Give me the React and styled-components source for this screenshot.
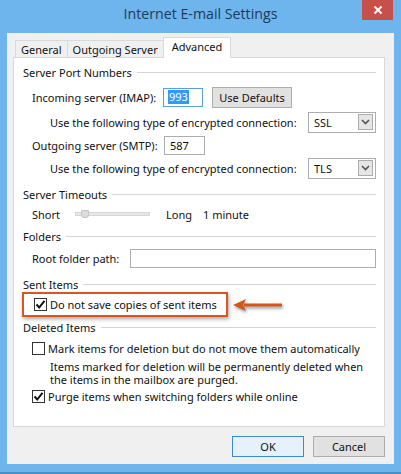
import React from "react";
import styled, { createGlobalStyle } from "styled-components";

const GlobalStyle = createGlobalStyle`
	html, body {
		margin: 0;
		padding: 0;
		background: #6db5ec;
	}
	body {
		font-family: "Noto Sans", "Liberation Sans", sans-serif;
		font-size: 11px;
		color: #1a1a1a;
	}
`;

function Checkbox({ checked }) {
	return (
		<StCheck>
			{checked && (
				<svg width="11" height="11" viewBox="0 0 11 11">
					<path d="M1.5 5.5 L4.2 8.5 L9.5 1.8" fill="none" stroke="#111" strokeWidth="2" />
				</svg>
			)}
		</StCheck>
	);
}

function Select({ value }) {
	return (
		<StSelect>
			<span>{value}</span>
			<StSelectArrow>
				<svg width="9" height="6" viewBox="0 0 9 6">
					<path d="M1 1 L4.5 4.5 L8 1" fill="none" stroke="#555" strokeWidth="1.6" />
				</svg>
			</StSelectArrow>
		</StSelect>
	);
}

function Header({ children, mt }) {
	return (
		<StHeader $mt={mt}>
			<span>{children}</span>
			<StRule />
		</StHeader>
	);
}

function App() {
	return (
		<>
			<GlobalStyle />
			<StWindow>
				<StTitleBar>
					<StTitle>Internet E-mail Settings</StTitle>
					<StClose>
						<svg width="10" height="10" viewBox="0 0 10 10">
							<path d="M1.5 1.5 L8.5 8.5 M8.5 1.5 L1.5 8.5" stroke="#fff" strokeWidth="1.8" />
						</svg>
					</StClose>
				</StTitleBar>
				<StBody>
					<StTabs>
						<StTab>General</StTab>
						<StTab>Outgoing Server</StTab>
						<StTab $active>Advanced</StTab>
					</StTabs>
					<StPanel>
						<Header mt={6}>Server Port Numbers</Header>
						<StRow $mt={7} $indent={9}>
							<StLabel $w={131}>Incoming server (IMAP):</StLabel>
							<StInput $w={40} $focus>
								<StSelected>993</StSelected>
							</StInput>
							<StButton $w={80} $ml={9}>Use Defaults</StButton>
						</StRow>
						<StRow $mt={5} $indent={27}>
							<StLabel $w={258}>Use the following type of encrypted connection:</StLabel>
							<Select value="SSL" />
						</StRow>
						<StRow $mt={3} $indent={9}>
							<StLabel $w={132}>Outgoing server (SMTP):</StLabel>
							<StInput $w={41}>587</StInput>
						</StRow>
						<StRow $mt={3} $indent={27}>
							<StLabel $w={258}>Use the following type of encrypted connection:</StLabel>
							<Select value="TLS" />
						</StRow>
						<Header mt={8}>Server Timeouts</Header>
						<StRow $mt={4} $h={16} $indent={9}>
							<StLabel $w={41}>Short</StLabel>
							<StSlider>
								<StThumb />
							</StSlider>
							<StLabel $w={35} $ml={14}>Long</StLabel>
							<span>1 minute</span>
						</StRow>
						<Header mt={6}>Folders</Header>
						<StRow $mt={4} $indent={9}>
							<StLabel $w={98}>Root folder path:</StLabel>
							<StInput $w={246} />
						</StRow>
						<Header mt={8}>Sent Items</Header>
						<StHighlight>
							<Checkbox checked />
							<span>Do not save copies of sent items</span>
							<StArrow width="52" height="16" viewBox="0 0 52 16">
								<path d="M12 8 H50" stroke="#d3561f" strokeWidth="3" />
								<path d="M1 8 L14 2 L11 8 L14 14 Z" fill="#d3561f" />
							</StArrow>
						</StHighlight>
						<Header mt={2}>Deleted Items</Header>
						<StRow $mt={5} $h={16} $indent={9}>
							<Checkbox />
							<span>Mark items for deletion but do not move them automatically</span>
						</StRow>
						<StNote>
							<div>Items marked for deletion will be permanently deleted when</div>
							<div>the items in the mailbox are purged.</div>
						</StNote>
						<StRow $mt={2} $h={16} $indent={9}>
							<Checkbox checked />
							<span>Purge items when switching folders while online</span>
						</StRow>
					</StPanel>
					<StFooter>
						<StButton $w={72} $default>
							OK
						</StButton>
						<StButton $w={72}>Cancel</StButton>
					</StFooter>
				</StBody>
			</StWindow>
		</>
	);
}

export default App;

const StWindow = styled.div`
	width: 401px;
	height: 474px;
	background: #6db5ec;
	display: flex;
	flex-direction: column;
	box-sizing: border-box;
	padding: 0 7px 8px 7px;
	border-bottom: 2px solid #4b8fc6;
`;

const StTitleBar = styled.div`
	height: 33px;
	position: relative;
	display: flex;
	justify-content: center;
	align-items: flex-start;
`;

const StTitle = styled.div`
	font-family: "Open Sans", "Noto Sans", sans-serif;
	font-size: 14.2px;
	color: #203a5a;
	margin-top: 4px;
`;

const StClose = styled.div`
	position: absolute;
	right: 1px;
	top: 0;
	width: 31px;
	height: 20px;
	background: #c9504a;
	display: flex;
	align-items: center;
	justify-content: center;
`;

const StBody = styled.div`
	flex: 1;
	background: #f0f0f0;
	display: flex;
	flex-direction: column;
	padding: 3px 9px 0 6px;
`;

const StTabs = styled.div`
	display: flex;
	align-items: flex-end;
	height: 21px;
	padding-left: 2px;
`;

const StTab = styled.div`
	height: ${(p) => (p.$active ? "21px" : "17px")};
	box-sizing: border-box;
	padding: ${(p) => (p.$active ? "1px 8px 0 8px" : "1px 5px 0 5px")};
	border: 1px solid #d9d9d9;
	border-bottom: none;
	background: ${(p) => (p.$active ? "#fff" : "#f0f0f0")};
	margin-right: -1px;
	position: relative;
	z-index: ${(p) => (p.$active ? 2 : 1)};
	margin-bottom: ${(p) => (p.$active ? "-1px" : "0")};
	line-height: 15px;
	color: #111;
`;

const StPanel = styled.div`
	height: 370px;
	box-sizing: border-box;
	background: #fff;
	border: 1px solid #d9d9d9;
	display: flex;
	flex-direction: column;
	padding: 0 8px 0 9px;
`;

const StHeader = styled.div`
	display: flex;
	align-items: center;
	height: 16px;
	margin-top: ${(p) => p.$mt}px;
	color: #111;
	span {
		margin-right: 5px;
	}
`;

const StRule = styled.div`
	flex: 1;
	height: 1px;
	background: #d5d5d5;
	margin-top: 1px;
`;

const StRow = styled.div`
	display: flex;
	align-items: center;
	height: ${(p) => p.$h || 20}px;
	margin-top: ${(p) => p.$mt}px;
	padding-left: ${(p) => p.$indent}px;
	gap: ${(p) => (p.$h ? 2 : 0)}px;
	color: #111;
	white-space: nowrap;
`;

const StLabel = styled.span`
	width: ${(p) => p.$w}px;
	margin-left: ${(p) => p.$ml || 0}px;
	flex-shrink: 0;
`;

const StInput = styled.div`
	width: ${(p) => p.$w}px;
	height: 19px;
	box-sizing: border-box;
	border: 1px solid ${(p) => (p.$focus ? "#5a9ee0" : "#abadb3")};
	background: #fff;
	display: flex;
	align-items: center;
	padding-left: 5px;
`;

const StSelected = styled.span`
	background: #3399ff;
	color: #fff;
	line-height: 14px;
	padding: 0 1px;
	margin-left: -1px;
`;

const StButton = styled.div`
	width: ${(p) => p.$w}px;
	height: 21px;
	box-sizing: border-box;
	margin-left: ${(p) => p.$ml || 0}px;
	border: 1px solid ${(p) => (p.$default ? "#3c8ad6" : "#adadad")};
	background: ${(p) => (p.$default ? "#e5f1fb" : "#e1e1e1")};
	display: flex;
	align-items: center;
	justify-content: center;
	color: #111;
`;

const StSelect = styled.div`
	width: 68px;
	height: 21px;
	box-sizing: border-box;
	border: 1px solid #abadb3;
	background: #fff;
	display: flex;
	align-items: center;
	justify-content: space-between;
	padding: 1px 2px 1px 5px;
`;

const StSelectArrow = styled.div`
	width: 15px;
	height: 16px;
	box-sizing: border-box;
	background: #e5e5e5;
	border: 1px solid #acacac;
	display: flex;
	align-items: center;
	justify-content: center;
`;

const StSlider = styled.div`
	width: 75px;
	height: 4px;
	background: #e7e7e7;
	border: 1px solid #d6d6d6;
	box-sizing: border-box;
	position: relative;
`;

const StThumb = styled.div`
	position: absolute;
	left: 5px;
	top: -3px;
	width: 6px;
	height: 6px;
	background: #dcdcdc;
	border: 1px solid #c4c4c4;
	border-radius: 0 0 3px 3px;
`;

const StHighlight = styled.div`
	position: relative;
	display: flex;
	align-items: center;
	gap: 2px;
	height: 25px;
	width: 206px;
	box-sizing: border-box;
	margin-left: -1px;
	padding-left: 10px;
	border: 2px solid #d9561e;
	box-shadow: 1px 2px 4px rgba(0, 0, 0, 0.35);
	color: #111;
	white-space: nowrap;
`;

const StArrow = styled.svg`
	position: absolute;
	left: 208px;
	top: 3px;
	filter: drop-shadow(1px 2px 1.5px rgba(0, 0, 0, 0.4));
`;

const StCheck = styled.div`
	width: 13px;
	height: 13px;
	box-sizing: border-box;
	border: 1px solid #333;
	background: #fff;
	display: flex;
	align-items: center;
	justify-content: center;
	flex-shrink: 0;
	margin-right: 1px;
`;

const StNote = styled.div`
	padding-left: 27px;
	margin-top: 4px;
	line-height: 13px;
	color: #111;
	white-space: nowrap;
`;

const StFooter = styled.div`
	display: flex;
	justify-content: flex-end;
	gap: 9px;
	padding-top: 9px;
`;
